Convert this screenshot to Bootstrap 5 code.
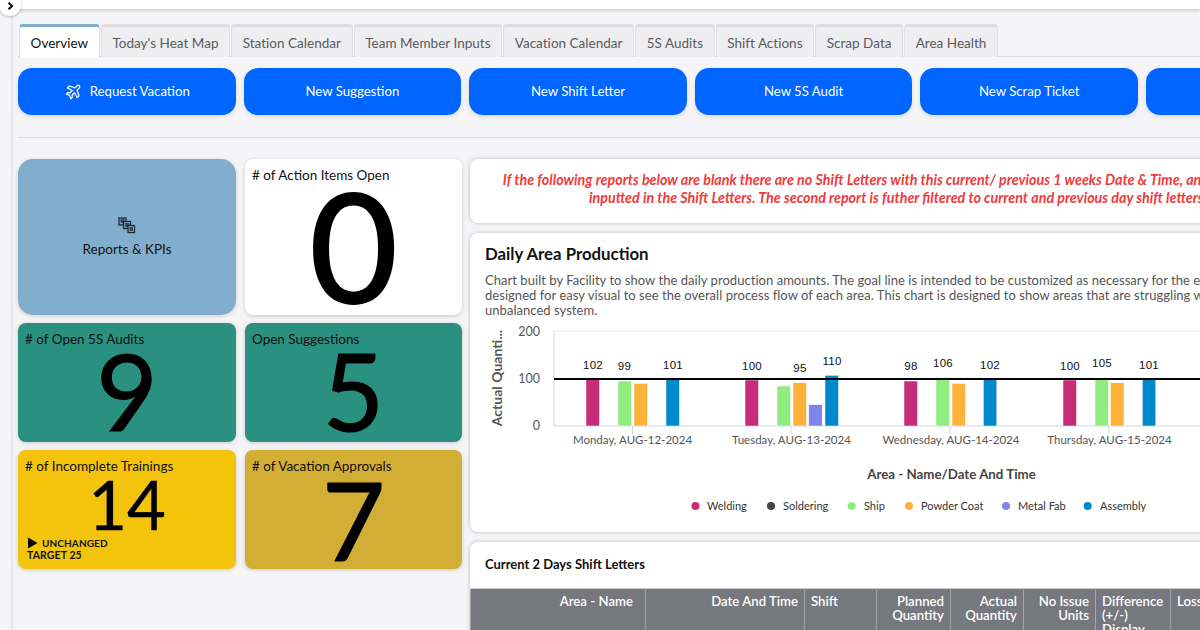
<!DOCTYPE html>
<html lang="en">
<head>
  <meta charset="UTF-8" />
  <title>Overview</title>
  <link rel="stylesheet" href="https://cdn.jsdelivr.net/npm/bootstrap@5.3.2/dist/css/bootstrap.min.css" />
  <style>
    html, body { height: 630px; overflow: hidden; }
    body { font-family: Lato, "Noto Sans", sans-serif; background-color: #f5f5f8; color: #111; font-size: 13.5px; }
    .top-strip { height: 9px; background: #fff; box-shadow: 0 1px 4px rgba(0,0,0,.22); position: relative; z-index: 2; }
    .toggle-dot { position: absolute; left: -1px; top: -6px; width: 22px; height: 22px; border-radius: 50%; background: #fff; box-shadow: 0 1px 3px rgba(0,0,0,.25); z-index: 3; }
    .toggle-dot svg { position: absolute; left: 8px; top: 8px; }
    .page-wrap { margin-left: 11px; width: 1400px; height: 621px; padding: 15px 0 0 6px; border-left: 1px solid #e4e4e8; box-shadow: inset 3px 0 3px -2px rgba(0,0,0,.05); overflow: hidden; }
    .tab-row { border-bottom: 1px solid #dcdce0; height: 33px; padding-left: 1px; gap: 1px; }
    .tab-item { height: 33px; padding: 6px 10.6px 0; background: #eeeef0; border: 1px solid #e0e0e3; border-top: 3px solid #dddde0; border-bottom: 0; border-radius: 4px 4px 0 0; color: #5a5a60; white-space: nowrap; font-size: 13.5px; letter-spacing: .02px; }
    .tab-item.on { background: #fff; color: #111; border-top-color: #82aecd; height: 34px; }
    .action-row { margin-top: 11px; gap: 8px; width: 1400px; }
    .action-btn { width: 217.6px; height: 47px; flex: none; background: #0066ff; border: 0; border-radius: 14px; color: #fff; font-size: 13.2px; padding: 0; box-shadow: 0 2px 5px rgba(0,0,0,.1); }
    .action-btn svg { margin-right: 8px; vertical-align: -5px; }
    .divider { height: 1px; background: #dcdce0; margin: 22px 0 21px; width: 1400px; }
    .tile-col { width: 444px; flex: none; display: grid; grid-template-columns: 218px 217px; grid-template-rows: 156px 119px 119px; gap: 8px 9px; }
    .tile { border-radius: 8px; box-shadow: 0 1px 4px rgba(0,0,0,.18); padding: 8px 7px 7px; position: relative; overflow: hidden; line-height: 17px; }
    .tile-num { text-align: center; line-height: 1; color: #000; -webkit-text-stroke: 1.2px #000; }
    .tile-blue { background: #82aecd; border-radius: 15px; padding: 8px 7px 7px; }
    .tile-white { background: #fff; }
    .tile-teal { background: #2a9080; }
    .tile-yellow { background: #f4c40d; }
    .tile-gold { background: #d3ae35; }
    .n-xl { font-size: 152px; margin-top: -16px; -webkit-text-stroke: 2px #000; }
    .n-lg { font-size: 106px; margin-top: -11px; }
    .n-md { font-size: 67px; margin-top: -4px; -webkit-text-stroke: .4px #000; }
    .n-gold { font-size: 109px; margin-top: -11px; }
    .tile-foot { position: absolute; left: 9px; bottom: 8px; font-size: 10.5px; font-weight: 700; line-height: 12px; letter-spacing: .1px; }
    .tile-foot span { font-size: 10px; }
    .right-col { width: 856px; flex: none; margin-left: 8px; }
    .panel-box { background: #fff; border-radius: 8px; box-shadow: 0 0 4px rgba(0,0,0,.22); }
    .notice { height: 64px; padding-top: 12px; text-align: center; color: #ef3b3b; font-weight: 700; font-style: italic; font-size: 14.3px; line-height: 17.5px; white-space: nowrap; }
    .chart-panel { margin-top: 10px; height: 299px; padding: 10px 15px 0; position: relative; overflow: hidden; }
    .chart-title { font-size: 16.8px; font-weight: 700; line-height: 21px; margin: 0 0 9px; }
    .chart-desc { font-size: 13px; line-height: 15px; color: #555; white-space: nowrap; margin: 0; letter-spacing: .04px; }
    .chart-svg { position: absolute; left: 0; top: 89px; }
    .chart-svg text { font-family: Lato, "Noto Sans", sans-serif; }
    .chart-svg .val { font-family: "Liberation Sans", sans-serif; font-size: 11.5px; fill: #111; text-anchor: middle; letter-spacing: .3px; }
    .chart-svg .tick { font-size: 11.5px; fill: #555; text-anchor: middle; }
    .chart-svg .yl { font-size: 12.5px; fill: #555; text-anchor: end; }
    .chart-svg .leg { font-size: 11px; fill: #333; }
    .shift-panel { margin-top: 10px; height: 200px; overflow: hidden; }
    .shift-title { font-weight: 700; padding: 13px 15px 0; height: 46px; font-size: 13px; }
    .shift-table { table-layout: fixed; width: 800px; margin: 0; font-size: 13.2px; line-height: 14px; }
    .shift-table th { background: #77777f; color: #fff; font-weight: 600; border: 1px solid #a5a5ab; border-top: 1px solid #cfcfd3; border-bottom: 0; padding: 5px 6px 0; height: 60px; vertical-align: top; }
    .shift-table th.area-head { padding-right: 12px; }
  </style>
</head>
<body>
  <div class="top-strip">
    <div class="toggle-dot"><svg width="7" height="8" viewBox="0 0 7 8"><path d="M1.5 .8l3.500 3.200-3.500 3.200" fill="none" stroke="#111" stroke-width="2.200"/></svg></div>
  </div>
  <div class="page-wrap">
    <div class="d-flex tab-row">
      <div class="tab-item on">Overview</div>
      <div class="tab-item">Today's Heat Map</div>
      <div class="tab-item">Station Calendar</div>
      <div class="tab-item">Team Member Inputs</div>
      <div class="tab-item">Vacation Calendar</div>
      <div class="tab-item">5S Audits</div>
      <div class="tab-item">Shift Actions</div>
      <div class="tab-item">Scrap Data</div>
      <div class="tab-item">Area Health</div>
    </div>

    <div class="d-flex action-row">
      <button class="btn action-btn"><svg width="18" height="18" viewBox="0 0 24 24" fill="none" stroke="#fff" stroke-width="1.700" stroke-linejoin="round" stroke-linecap="round"><path d="M14.5 6.5l3 -2.9a2.05 2.05 0 0 1 2.9 2.9l-2.9 3l2.5 7.5l-2.5 2.55l-3.5 -6.55l-3 3v3l-2 2l-1.5 -4.5l-4.5 -1.5l2 -2h3l3 -3l-6.5 -3.5l2.5 -2.5z"/></svg>Request Vacation</button>
      <button class="btn action-btn">New Suggestion</button>
      <button class="btn action-btn">New Shift Letter</button>
      <button class="btn action-btn">New 5S Audit</button>
      <button class="btn action-btn">New Scrap Ticket</button>
      <button class="btn action-btn">New Action</button>
    </div>

    <div class="divider"></div>

    <div class="d-flex align-items-start">
      <div class="tile-col">
        <div class="tile tile-blue d-flex flex-column align-items-center justify-content-center">
          <svg width="18" height="17" viewBox="0 0 18 17" fill="none" stroke="#1c2530" stroke-width="1.300" style="margin-bottom:7px">
            <rect x="1" y="1" width="7" height="7" fill="#82aecd"/><path d="M2.5 3h4M2.5 5h4"/>
            <rect x="5.5" y="4.5" width="7" height="7" fill="#82aecd"/><path d="M7 7h4M7 9h4"/>
            <rect x="10" y="8.500" width="6.500" height="7" fill="#82aecd"/><path d="M11.500 11h3.500M11.500 13h3.500"/>
          </svg>
          <div>Reports &amp; KPIs</div>
        </div>
        <div class="tile tile-white">
          <div># of Action Items Open</div>
          <div class="tile-num n-xl">0</div>
        </div>
        <div class="tile tile-teal">
          <div># of Open 5S Audits</div>
          <div class="tile-num n-lg">9</div>
        </div>
        <div class="tile tile-teal">
          <div>Open Suggestions</div>
          <div class="tile-num n-lg">5</div>
        </div>
        <div class="tile tile-yellow">
          <div># of Incomplete Trainings</div>
          <div class="tile-num n-md">14</div>
          <div class="tile-foot">
            <div class="d-flex align-items-center gap-1"><svg width="11" height="12" viewBox="0 0 11 12"><path d="M1 0.500L10.500 6 1 11.500z" fill="#000"/></svg><span>UNCHANGED</span></div>
            <div>TARGET 25</div>
          </div>
        </div>
        <div class="tile tile-gold">
          <div># of Vacation Approvals</div>
          <div class="tile-num n-gold">7</div>
        </div>
      </div>

      <div class="right-col">
        <div class="panel-box notice">If the following reports below are blank there are no Shift Letters with this current/ previous 1 weeks Date &amp; Time, and Area - Names<br>inputted in the Shift Letters. The second report is futher filtered to current and previous day shift letters.</div>

        <div class="panel-box chart-panel">
          <h5 class="chart-title">Daily Area Production</h5>
          <p class="chart-desc">Chart built by Facility to show the daily production amounts. The goal line is intended to be customized as necessary for the each area. This chart is<br>designed for easy visual to see the overall process flow of each area. This chart is designed to show areas that are struggling with an<br>unbalanced system.</p>
          <svg class="chart-svg" width="856" height="210" viewBox="470 322 856 210">
            <path d="M554 331H1326" stroke="#efefef" stroke-width="1"/>
            <path d="M554 331V426M554 426H1326" stroke="#ccd6eb" stroke-width="1" fill="none"/>
            <path d="M632.500 426v8M791 426v8M950 426v8M1109 426v8" stroke="#ccd6eb" stroke-width="1"/>
            <text class="yl" x="540" y="336">200</text>
            <text class="yl" x="540" y="383">100</text>
            <text class="yl" x="540" y="430">0</text>
            <text x="502" y="378" transform="rotate(-90 502 378)" text-anchor="middle" style="font-size:14px;fill:#555;font-weight:700">Actual Quanti...</text>

            <g stroke="#fff" stroke-width=".5">
              <g fill="#c62d76">
                <rect x="586" y="379" width="13.500" height="47"/>
                <rect x="745" y="380" width="13.500" height="46"/>
                <rect x="904" y="381" width="13.500" height="45"/>
                <rect x="1063" y="380" width="13.500" height="46"/>
              </g>
              <g fill="#90ed7d">
                <rect x="618" y="381" width="13.500" height="45"/>
                <rect x="777" y="386" width="13.500" height="40"/>
                <rect x="936" y="377.500" width="13.500" height="48.500"/>
                <rect x="1095" y="378" width="13.500" height="48"/>
              </g>
              <g fill="#ffb239">
                <rect x="634" y="383.300" width="13.500" height="42.700"/>
                <rect x="793" y="382.700" width="13.500" height="43.300"/>
                <rect x="952" y="383.300" width="13.500" height="42.700"/>
                <rect x="1110.500" y="382.700" width="13.500" height="43.300"/>
              </g>
              <rect x="808.700" y="404.700" width="13.500" height="21.300" fill="#8085e9"/>
              <g fill="#0088cc">
                <rect x="666" y="379" width="13.500" height="47"/>
                <rect x="825" y="375.300" width="13.500" height="50.700"/>
                <rect x="983.300" y="379" width="13.500" height="47"/>
                <rect x="1142.300" y="379" width="13.500" height="47"/>
              </g>
            </g>
            <path d="M554 379H1326" stroke="#000" stroke-width="2"/>

            <text class="val" x="593" y="368.500">102</text>
            <text class="val" x="624.500" y="369.500">99</text>
            <text class="val" x="673" y="368.500">101</text>
            <text class="val" x="752" y="369.500">100</text>
            <text class="val" x="800" y="372">95</text>
            <text class="val" x="832" y="364.500">110</text>
            <text class="val" x="911" y="370">98</text>
            <text class="val" x="943" y="366.700">106</text>
            <text class="val" x="990" y="368.500">102</text>
            <text class="val" x="1070" y="369.500">100</text>
            <text class="val" x="1102" y="366.700">105</text>
            <text class="val" x="1149" y="368.500">101</text>

            <text class="tick" x="632.500" y="444">Monday, AUG-12-2024</text>
            <text class="tick" x="791.500" y="444">Tuesday, AUG-13-2024</text>
            <text class="tick" x="951" y="444">Wednesday, AUG-14-2024</text>
            <text class="tick" x="1109.500" y="444">Thursday, AUG-15-2024</text>

            <text x="951.500" y="479" text-anchor="middle" style="font-size:13.300px;font-weight:700;fill:#444">Area - Name/Date And Time</text>

            <circle cx="695.500" cy="506" r="4" fill="#c62d76"/><text class="leg" x="707" y="510">Welding</text>
            <circle cx="771" cy="506" r="4" fill="#434348"/><text class="leg" x="783" y="510">Soldering</text>
            <circle cx="851.700" cy="506" r="4" fill="#90ed7d"/><text class="leg" x="864" y="510">Ship</text>
            <circle cx="909" cy="506" r="4" fill="#ffb239"/><text class="leg" x="921" y="510">Powder Coat</text>
            <circle cx="1006" cy="506" r="4" fill="#8085e9"/><text class="leg" x="1018" y="510">Metal Fab</text>
            <circle cx="1087.700" cy="506" r="4" fill="#0088cc"/><text class="leg" x="1100" y="510">Assembly</text>
          </svg>
        </div>

        <div class="panel-box shift-panel">
          <div class="shift-title">Current 2 Days Shift Letters</div>
          <table class="table shift-table">
            <colgroup><col style="width:175px"><col style="width:159px"><col style="width:72px"><col style="width:74px"><col style="width:73px"><col style="width:72px"><col style="width:75px"><col style="width:100px"></colgroup>
            <thead>
              <tr>
                <th class="text-end area-head">Area - Name</th>
                <th class="text-end">Date And Time</th>
                <th>Shift</th>
                <th class="text-end">Planned Quantity</th>
                <th class="text-end">Actual Quantity</th>
                <th class="text-end">No Issue Units</th>
                <th>Difference (+/-) Display</th>
                <th>Loss Code</th>
              </tr>
            </thead>
          </table>
        </div>
      </div>
    </div>
  </div>
</body>
</html>
